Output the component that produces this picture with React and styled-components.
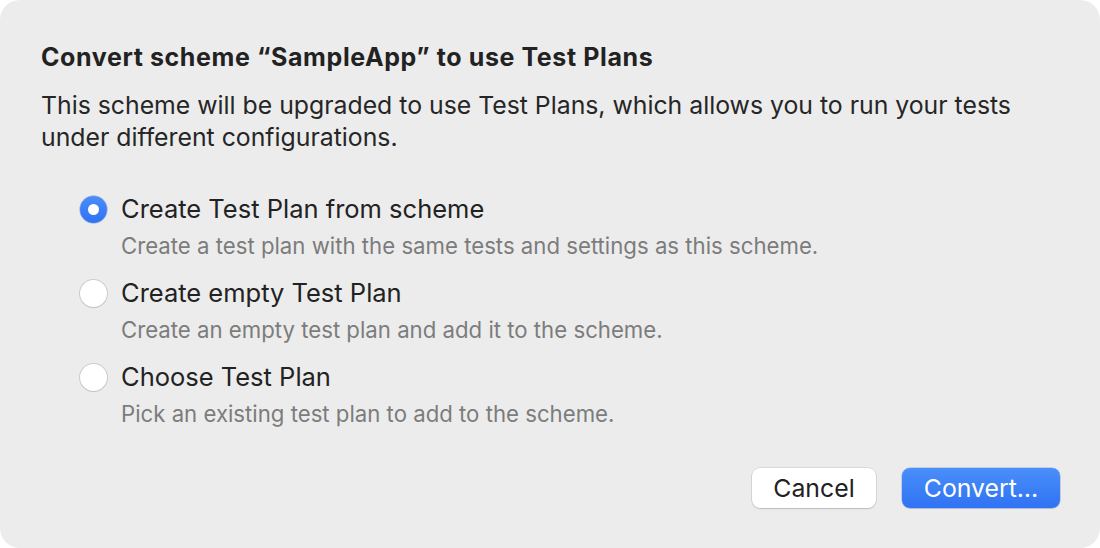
import React, { useState } from "react";
import styled, { createGlobalStyle } from "styled-components";

const Global = createGlobalStyle`
  html, body { margin: 0; padding: 0; background: #ffffff; }
  body { font-family: Inter, "Noto Sans", "Liberation Sans", sans-serif; -webkit-font-smoothing: antialiased; }
  * { box-sizing: border-box; }
`;

const Dialog = styled.div`
  width: 1100px;
  height: 548px;
  background: #ececec;
  border-radius: 20px;
  padding: 42px 40px 40px 41px;
  display: flex;
  flex-direction: column;
  color: #242424;
`;

const Title = styled.h1`
  margin: 0;
  font-size: 25px;
  line-height: 30px;
  font-weight: 700;
  letter-spacing: 0.6px;
  color: #222;
`;

const Message = styled.p`
  margin: 17px 0 0;
  font-size: 24.8px;
  line-height: 32px;
  font-weight: 400;
  color: #262626;
`;

const Options = styled.div`
  margin-top: 41px;
  padding-left: 39px;
  display: flex;
  flex-direction: column;
  gap: 19px;
`;

const Option = styled.label`
  display: grid;
  grid-template-columns: 27px 1fr;
  column-gap: 14px;
  row-gap: 9px;
  align-items: start;
  cursor: default;
`;

const Radio = styled.span`
  margin-top: 2px;
  width: 27px;
  height: 27px;
  border-radius: 50%;
  display: flex;
  align-items: center;
  justify-content: center;
  background: ${(p) => (p.$on ? "linear-gradient(#4a8df8, #2f72f5)" : "#ffffff")};
  box-shadow: ${(p) =>
    p.$on
      ? "0 0 0 0.5px rgba(30,90,220,0.5)"
      : "0 0 0 1px rgba(0,0,0,0.13), 0 1px 1px rgba(0,0,0,0.06)"};
  &::after {
    content: "";
    width: 11px;
    height: 11px;
    border-radius: 50%;
    background: #fff;
    display: ${(p) => (p.$on ? "block" : "none")};
  }
`;

const Label = styled.span`
  font-size: 25.5px;
  line-height: 30px;
  color: #222;
`;

const Sub = styled.span`
  grid-column: 2;
  font-size: 22.2px;
  line-height: 26px;
  color: #7c7c7c;
`;

const Footer = styled.div`
  margin-top: auto;
  display: flex;
  justify-content: flex-end;
  gap: 26px;
`;

const Button = styled.button`
  height: 40px;
  min-width: ${(p) => (p.$primary ? "158px" : "124px")};
  padding: 0 18px;
  border: none;
  border-radius: 8px;
  font-family: inherit;
  font-size: 24.8px;
  color: ${(p) => (p.$primary ? "#fff" : "#222")};
  background: ${(p) => (p.$primary ? "linear-gradient(#4a8ff9, #2f72f4)" : "#ffffff")};
  box-shadow: ${(p) =>
    p.$primary
      ? "0 0 0 0.5px rgba(30,90,220,0.4), 0 1px 1px rgba(0,0,0,0.1)"
      : "0 0 0 0.5px rgba(0,0,0,0.15), 0 1px 1.5px rgba(0,0,0,0.15)"};
`;

const items = [
  ["Create Test Plan from scheme", "Create a test plan with the same tests and settings as this scheme."],
  ["Create empty Test Plan", "Create an empty test plan and add it to the scheme."],
  ["Choose Test Plan", "Pick an existing test plan to add to the scheme."],
];

export default function App() {
  const [sel, setSel] = useState(0);
  return (
    <>
      <Global />
      <Dialog>
        <Title>Convert scheme “SampleApp” to use Test Plans</Title>
        <Message>
          This scheme will be upgraded to use Test Plans, which allows you to run your tests
          <br />
          under different configurations.
        </Message>
        <Options>
          {items.map(([l, s], i) => (
            <Option key={l} onClick={() => setSel(i)}>
              <Radio $on={sel === i} />
              <Label>{l}</Label>
              <Sub>{s}</Sub>
            </Option>
          ))}
        </Options>
        <Footer>
          <Button>Cancel</Button>
          <Button $primary>Convert…</Button>
        </Footer>
      </Dialog>
    </>
  );
}
